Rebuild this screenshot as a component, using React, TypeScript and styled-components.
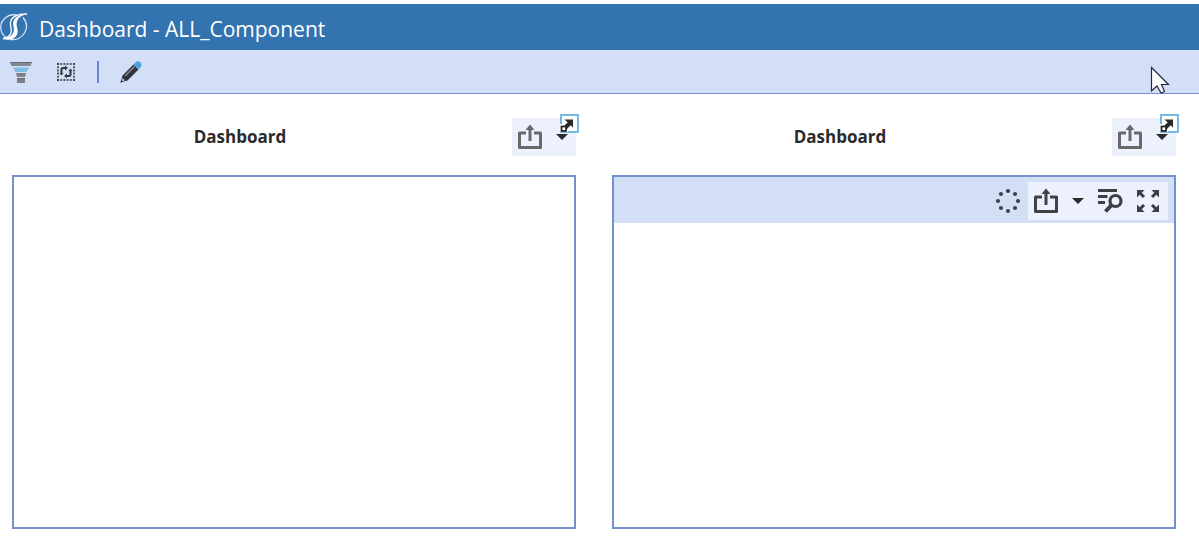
import React from 'react';
import styled, { createGlobalStyle } from 'styled-components';

const GlobalStyle = createGlobalStyle`
  *, *::before, *::after { box-sizing: border-box; }
  body {
    margin: 0;
    background: #fff;
    color: #2b2b2b;
    font-family: "Segoe UI", "Open Sans", "Noto Sans", sans-serif;
  }
`;

const Page = styled.div`
  display: flex;
  flex-direction: column;
  min-height: 100vh;
  padding-top: 4px;
`;

const TitleBar = styled.header`
  display: flex;
  align-items: center;
  gap: 11px;
  height: 46px;
  background: #3273b0;
  color: #fff;
`;

const PageTitle = styled.h1`
  margin: 0;
  padding-top: 4px;
  font-size: 21px;
  line-height: 30px;
  font-weight: 400;
  white-space: nowrap;
`;

const Toolbar = styled.div`
  position: relative;
  display: flex;
  align-items: center;
  height: 44px;
  padding-left: 8px;
  background: #d3dff6;
  border-bottom: 1px solid #7391cd;
`;

const IconButton = styled.button<{ $width: number }>`
  display: flex;
  flex: none;
  align-items: center;
  justify-content: center;
  width: ${(p) => p.$width}px;
  height: 38px;
  margin: 0;
  padding: 0;
  border: 0;
  background: transparent;
  cursor: pointer;

  svg { display: block; }
`;

const FilterButton = styled(IconButton)`
  margin-right: 19px;
`;

const Divider = styled.span`
  width: 2px;
  height: 22px;
  margin: 0 20px 0 18px;
  background: #5f8ad4;
`;

const Pointer = styled.svg`
  position: absolute;
  right: 29px;
  top: 16px;
  pointer-events: none;
`;

const Board = styled.main`
  display: grid;
  flex: 1;
  grid-template-columns: 1fr 1fr;
  gap: 36px;
  padding: 24px 23px 7px 12px;
`;

const Column = styled.section`
  display: flex;
  flex-direction: column;
  gap: 19px;
  min-width: 0;
`;

const ColumnHeader = styled.div`
  display: grid;
  grid-template-columns: 1fr 108px;
  align-items: center;
`;

const ColumnTitle = styled.h2`
  margin: 0;
  font-size: 17px;
  line-height: 24px;
  font-weight: 700;
  text-align: center;
`;

const Tools = styled.div`
  position: relative;
  display: flex;
  justify-self: end;
  height: 38px;
  background: #edf1fe;
`;

const BadgeButton = styled.button`
  position: absolute;
  top: -5px;
  right: -3px;
  width: 20px;
  height: 20px;
  padding: 0;
  border: 0;
  background: none;

  svg { display: block; }
`;

const Panel = styled.div`
  flex: 1;
  border: 2px solid #7391cd;
  background: #fff;
`;

const PanelBar = styled.div`
  display: flex;
  align-items: center;
  justify-content: flex-end;
  gap: 2px;
  height: 46px;
  padding: 5px 6px 3px 0;
  background: #d3dff6;
`;

const Logo = () => (
  <svg width="28" height="30" viewBox="0 0 28 30" fill="none" aria-hidden="true">
    <path d="M18 3.500C8 .5 0 8 .8 16.500C1.200 20.500 3 23.500 6 25.500" stroke="#d4e4f2" strokeWidth="1.300" />
    <path d="M23 5.500C27 10 27.500 15 25 20C22 26 16 28.500 10 27.500" stroke="#d4e4f2" strokeWidth="1.300" />
    <path d="M28 2C20 2 15 5 13.500 9C12 13 15 16 13.500 20C12 24 8 26 2 27C11 29.500 16.500 26 17.500 21C18.500 17 15.500 14 17 9.500C18.500 5 22 3 28 2Z" fill="#fff" />
    <path d="M27 2C18 1.500 11.500 5 10.500 10C9.500 14 12.500 17 11 21C10 24 6 26 3 26.500" stroke="#fff" strokeWidth="1.300" />
  </svg>
);

const FilterIcon = () => (
  <svg width="26" height="24" viewBox="0 0 26 24" aria-hidden="true">
    <path d="M2 2H24L22.500 6H3.500Z" fill="#85888f" />
    <path d="M2 2H24V3H2.500Z" fill="#676a70" />
    <path d="M5 7H21L19 11.500H7Z" fill="#a3cbea" />
    <path d="M5.500 8H20.500L18.500 12H7.500Z" fill="#80bde5" />
    <path d="M8 13H18L17 17H9Z" fill="#7d8088" />
    <path d="M9 18H17V23H9Z" fill="#7d8088" />
    <path d="M9 18H17V19H9Z" fill="#5f6268" />
  </svg>
);

const RefreshAreaIcon = () => (
  <svg width="20" height="20" viewBox="0 0 20 20" fill="none" stroke="#33373e" aria-hidden="true">
    <path d="M1 2H19M1 18H19M2 1V19M18 1V19" strokeWidth="1.500" strokeDasharray="2 1.200" />
    <path d="M9 6H6.500L5.500 7V12M11 14H13.500L14.500 13V8" strokeWidth="2" />
    <path d="M9 3.500V8.500L12 6ZM11 11.500V16.500L8 14Z" fill="#33373e" stroke="none" />
    <path d="M3.500 11H7.500L5.500 13.500ZM12.500 9H16.500L14.500 6.500Z" fill="#33373e" stroke="none" />
  </svg>
);

const PencilIcon = () => (
  <svg width="24" height="24" viewBox="0 0 24 24" aria-hidden="true">
    <path d="M1.500 22.500L3.500 15.500L14.500 4.500L19.500 9.500L8.500 20.500Z" fill="#30343a" />
    <path d="M6 16L15.500 6.500" stroke="#858a92" strokeWidth="1.500" />
    <path d="M3.500 18L6 20.500L2 22Z" fill="#b9c4d9" />
    <path d="M1.500 22.500L2.200 20L4 21.800Z" fill="#25292e" />
    <path d="M14.500 4.500L17 2C18.500 .8 20 1 21.200 2.300C22.800 3.800 23 5.500 21.800 7L19.500 9.500Z" fill="#4ba3dc" />
  </svg>
);

const ShareIcon = ({ color }: { color: string }) => (
  <svg width="26" height="26" viewBox="0 0 26 26" fill="none" stroke={color} aria-hidden="true">
    <path d="M9 9H2.500V23.500H23.500V9H17" strokeWidth="3" strokeLinejoin="round" />
    <path d="M13 17V3" strokeWidth="3" />
    <path d="M8.500 6L13 .5L17.500 6Z" fill={color} stroke="none" />
  </svg>
);

const CaretIcon = () => (
  <svg width="12" height="6" viewBox="0 0 12 6" aria-hidden="true">
    <path d="M0 0H12L6 6Z" fill="#2b2b2b" />
  </svg>
);

const OpenIcon = () => (
  <svg width="20" height="20" viewBox="0 0 20 20" fill="none" aria-hidden="true">
    <rect x="2" y="2" width="17" height="17" fill="#fff" stroke="#5fb0e0" strokeWidth="1.700" />
    <rect x="1" y="11" width="8" height="8" fill="#fff" />
    <path d="M6 15L12 9" stroke="#292929" strokeWidth="4" />
    <path d="M5.500 6.500H14V14.500Z" fill="#292929" />
    <rect x="2.500" y="13.500" width="4.500" height="4.500" fill="#fff" stroke="#292929" strokeWidth="1.800" />
  </svg>
);

const DotsIcon = () => (
  <svg width="26" height="26" viewBox="0 0 26 26" fill="#404347" aria-hidden="true">
    {[[13, 3], [20, 6], [23, 13], [20, 20], [13, 23], [6, 20], [3, 13], [6, 6]].map(([x, y]) => (
      <circle key={`${x}-${y}`} cx={x} cy={y} r="2.100" />
    ))}
  </svg>
);

const FindIcon = () => (
  <svg width="26" height="26" viewBox="0 0 26 26" fill="none" stroke="#3d3f42" strokeWidth="3.200" aria-hidden="true">
    <path d="M1 2.500H20M1 8.500H10.500M1 14.500H8" strokeWidth="3" />
    <circle cx="18.500" cy="13" r="5.500" />
    <path d="M14.500 17L8.500 23.500" strokeWidth="4" />
  </svg>
);

const ExpandIcon = () => (
  <svg width="24" height="24" viewBox="0 0 24 24" fill="#3d3f42" stroke="#3d3f42" strokeWidth="3" aria-hidden="true">
    {[0, 90, 180, 270].map((angle) => (
      <g key={angle} transform={`rotate(${angle} 12 12)`}>
        <path d="M1 1H8.500L1 8.500Z" stroke="none" />
        <path d="M3.500 3.500L8 8" />
      </g>
    ))}
  </svg>
);

const ShareControls = ({ color }: { color: string }) => (
  <>
    <IconButton $width={36} aria-label="Export"><ShareIcon color={color} /></IconButton>
    <IconButton $width={28} aria-label="Export options"><CaretIcon /></IconButton>
  </>
);

const BoardColumn = ({ children }: { children?: React.ReactNode }) => (
  <Column>
    <ColumnHeader>
      <ColumnTitle>Dashboard</ColumnTitle>
      <Tools>
        <ShareControls color="#696969" />
        <BadgeButton aria-label="Open dashboard"><OpenIcon /></BadgeButton>
      </Tools>
    </ColumnHeader>
    <Panel>{children}</Panel>
  </Column>
);

export default function App() {
  return (
    <>
      <GlobalStyle />
      <Page>
        <TitleBar>
          <Logo />
          <PageTitle>Dashboard - ALL_Component</PageTitle>
        </TitleBar>
        <Toolbar>
          <FilterButton $width={26} aria-label="Filter"><FilterIcon /></FilterButton>
          <IconButton $width={26} aria-label="Refresh"><RefreshAreaIcon /></IconButton>
          <Divider />
          <IconButton $width={24} aria-label="Edit"><PencilIcon /></IconButton>
          <Pointer width="20" height="30" viewBox="0 0 20 30" aria-hidden="true">
            <path d="M1.500 1.500V25L7 20L11 27L14.500 25.500L11.500 18.500H18.500Z" fill="#fff" stroke="#25283c" strokeWidth="1.200" />
          </Pointer>
        </Toolbar>
        <Board>
          <BoardColumn />
          <BoardColumn>
            <PanelBar>
              <IconButton $width={36} aria-label="Status"><DotsIcon /></IconButton>
              <Tools>
                <ShareControls color="#404246" />
                <IconButton $width={36} aria-label="Find"><FindIcon /></IconButton>
                <IconButton $width={40} aria-label="Expand"><ExpandIcon /></IconButton>
              </Tools>
            </PanelBar>
          </BoardColumn>
        </Board>
      </Page>
    </>
  );
}
